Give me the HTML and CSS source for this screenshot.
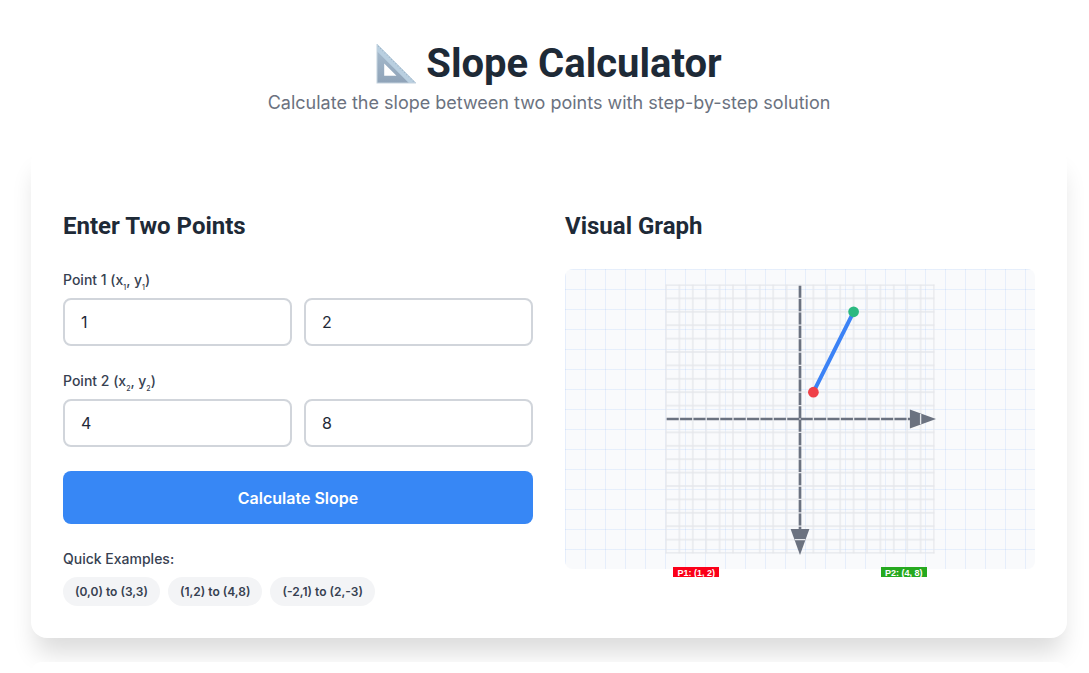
FILE: index.html
```html
<!DOCTYPE html>
<html lang="en">
<head>
    <meta charset="UTF-8">
    <meta name="viewport" content="width=device-width, initial-scale=1.0">
    <title>Slope Calculator</title>
    <link rel="stylesheet" href="styles.css">
</head>
<body>
    <header class="header">
        <h1>
            <svg class="logo" viewBox="0 0 40 40" aria-hidden="true">
                <defs>
                    <linearGradient id="body" x1="0" y1="0" x2="0" y2="1">
                        <stop offset="0" stop-color="#a9bed0"/>
                        <stop offset="1" stop-color="#8fa3b8"/>
                    </linearGradient>
                </defs>
                <path fill="url(#body)" fill-rule="evenodd" d="M1 0L39 38H1ZM8 19V31H20Z"/>
                <path fill="#b9cfe0" d="M1 0L39 38H32L1 7Z"/>
                <path stroke="#9db5c8" stroke-width="1" stroke-dasharray="1 2" d="M2 2L37 37"/>
                <path fill="none" stroke="#c3d2de" stroke-width="1" d="M1 0V38H39"/>
            </svg>
            <span>Slope Calculator</span>
        </h1>
        <p>Calculate the slope between two points with step-by-step solution</p>
    </header>
    <main>
        <section class="card calculator">
            <form class="column">
                <h2>Enter Two Points</h2>
                <div class="group">
                    <label for="x1">Point 1 (x<sub>1</sub>, y<sub>1</sub>)</label>
                    <div class="inputs">
                        <input id="x1" type="text" inputmode="decimal" value="1">
                        <input id="y1" type="text" inputmode="decimal" value="2" aria-label="y₁">
                    </div>
                </div>
                <div class="group">
                    <label for="x2">Point 2 (x<sub>2</sub>, y<sub>2</sub>)</label>
                    <div class="inputs">
                        <input id="x2" type="text" inputmode="decimal" value="4">
                        <input id="y2" type="text" inputmode="decimal" value="8" aria-label="y₂">
                    </div>
                </div>
                <button class="calculate" type="button">Calculate Slope</button>
                <p class="examples-title">Quick Examples:</p>
                <div class="examples">
                    <button type="button">(0,0) to (3,3)</button>
                    <button type="button">(1,2) to (4,8)</button>
                    <button type="button">(-2,1) to (2,-3)</button>
                </div>
            </form>
            <div class="column">
                <h2>Visual Graph</h2>
                <div class="graph">
                    <svg class="plot" viewBox="-200 -200 400 400" role="img" aria-label="Line from (1, 2) to (4, 8)">
                        <defs>
                            <pattern id="grid" x="-210" y="-210" width="20" height="20" patternUnits="userSpaceOnUse">
                                <path d="M10 0V20M0 10H20" fill="none" stroke="#e5e7eb" stroke-width="2"/>
                            </pattern>
                        </defs>
                        <rect x="-201" y="-201" width="402" height="402" fill="url(#grid)"/>
                        <!-- axes, broken where the grid lines cross -->
                        <g stroke="#6b7280" stroke-width="4" stroke-dasharray="18 2">
                            <line x1="-199" y1="0" x2="170" y2="0"/>
                            <line x1="0" y1="-199" x2="0" y2="170"/>
                        </g>
                        <g fill="#6b7280">
                            <path d="M164 -14L203 0L164 14Z"/>
                            <path d="M-14 164L0 203L14 164Z"/>
                        </g>
                        <path d="M180 -8V8M-8 180H8" stroke="#e5e7eb" stroke-width="2"/>
                        <!-- line and points -->
                        <line x1="20" y1="-40" x2="80" y2="-160" stroke="#3b82f6" stroke-width="6"/>
                        <circle cx="20" cy="-40" r="8" fill="#ef4048"/>
                        <circle cx="80" cy="-160" r="8" fill="#2bb980"/>
                    </svg>
                    <div class="point-labels">
                        <span class="p1">P1: (1, 2)</span>
                        <span class="p2">P2: (4, 8)</span>
                    </div>
                </div>
            </div>
        </section>
        <section class="card"></section>
    </main>
</body>
</html>
```
FILE: styles.css
```css
* {
    box-sizing: border-box;
}

body {
    font-family: Inter, sans-serif;
    margin: 0;
    padding: 40px 22px 0 31px;
    background-color: #fff;
    color: #1f2937;
}

h1, h2 {
    font-family: Roboto, sans-serif;
    font-weight: 700;
    margin: 0;
    color: #1e2a37;
}

.header {
    text-align: center;
    margin-bottom: 32px;
}

.header h1 {
    display: flex;
    justify-content: center;
    align-items: center;
    gap: 9px;
    font-size: 40px;
    line-height: 48px;
}

.logo {
    width: 41px;
    height: 41px;
}

.header p {
    margin: 3px 0 0;
    font-size: 18px;
    line-height: 24px;
    color: #6b7280;
}

.card {
    background-color: #fff;
    border-radius: 16px;
    padding: 32px 32px 0;
    box-shadow: 0 20px 25px -5px rgba(0, 0, 0, 0.14);
}

.calculator {
    display: grid;
    grid-template-columns: 1fr 1fr;
    gap: 32px;
    padding: 64px 32px 32px;
    margin-bottom: 24px;
}

.card:last-child {
    height: 11px;
    padding: 0;
    border-radius: 16px 16px 0 0;
}

h2 {
    font-size: 24px;
    line-height: 30px;
    margin-bottom: 28px;
}

.group {
    margin-bottom: 24px;
}

label, .examples-title {
    display: block;
    margin: 0 0 8px;
    font-size: 14px;
    line-height: 21px;
    font-weight: 500;
    color: #374151;
}

sub {
    font-size: 7px;
    line-height: 0;
    vertical-align: -5px;
}

.inputs {
    display: grid;
    grid-template-columns: 1fr 1fr;
    gap: 12px;
}

input {
    width: 100%;
    height: 48px;
    padding: 0 16px;
    border: 2px solid #d1d5db;
    border-radius: 8px;
    font: 400 16px Inter, sans-serif;
    color: #1f2937;
}

button {
    border: 0;
    font-family: Inter, sans-serif;
    font-weight: 600;
    cursor: pointer;
}

.calculate {
    width: 100%;
    height: 53px;
    margin-bottom: 24px;
    border-radius: 8px;
    background-color: #3787f5;
    color: #fff;
    font-size: 16px;
}

.examples {
    display: flex;
    flex-wrap: wrap;
    gap: 8px;
}

.examples button {
    height: 29px;
    padding: 0 12px;
    border-radius: 20px;
    background-color: #f3f4f6;
    color: #374151;
    font-size: 12px;
}

.graph {
    position: relative;
    height: 300px;
    padding: 16px;
    border-radius: 8px;
    background-color: #f9fafc;
    background-image:
        linear-gradient(rgba(59, 130, 246, 0.1) 1px, transparent 1px),
        linear-gradient(90deg, rgba(59, 130, 246, 0.1) 1px, transparent 1px);
    background-size: 20px 20px;
}

.plot {
    display: block;
    width: 100%;
    height: 100%;
    overflow: visible;
}

/* sits over the bottom edge of the graph */
.point-labels {
    position: absolute;
    left: 0;
    right: 0;
    bottom: -8px;
    display: flex;
    justify-content: center;
    gap: 162px;
}

.point-labels span {
    height: 10px;
    padding: 0 4px;
    overflow: hidden;
    font: 700 9px/13px "Liberation Sans", sans-serif;
    color: #fff;
}

.p1 {
    background-color: #fb0019;
}

.p2 {
    background-color: #26a91f;
}
```
